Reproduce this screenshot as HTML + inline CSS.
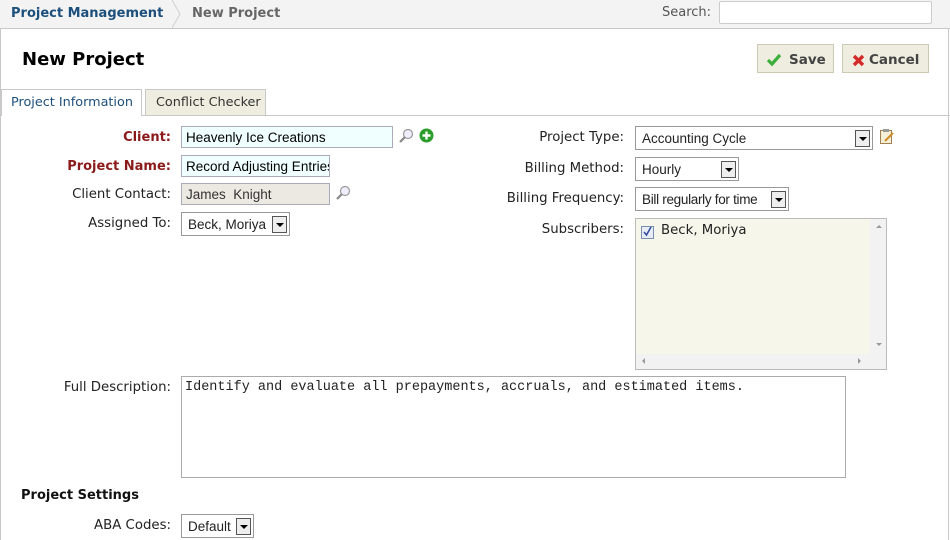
<!DOCTYPE html>
<html><head><style>
body{margin:0;width:950px;height:540px;overflow:hidden;background:#fff;font-family:"DejaVu Sans",Verdana,sans-serif;font-size:12.5px;color:#222;position:relative}
.a{position:absolute}
.top{left:0;top:0;width:950px;height:28px;background:#f3f3f3;border-bottom:1px solid #c8c8c8}
.lbl{position:absolute;text-align:right;font-size:13.3px;color:#222;white-space:nowrap}
.req{color:#8b1a1a;font-weight:bold;font-size:13px}
.inp{position:absolute;border:1px solid #aab;background:#fff;font-family:"Liberation Sans",Arial,sans-serif;font-size:13.5px;color:#000;box-sizing:border-box;padding:2px 4px;white-space:nowrap;overflow:hidden;line-height:17px}
.sel{position:absolute;border:1px solid #999;background:#fff;font-family:"Liberation Sans",Arial,sans-serif;font-size:13.5px;box-sizing:border-box;padding:3px 6px;white-space:nowrap;overflow:hidden;line-height:17px}
.dd{position:absolute;right:2px;top:3px;width:15px;height:17px;background:#eee;border:1px solid #555;box-sizing:border-box}
.dd:after{content:"";position:absolute;left:3px;top:6px;border-left:4px solid transparent;border-right:4px solid transparent;border-top:4px solid #000}
.btn{position:absolute;top:44px;height:29px;background:#efeddf;border:1px solid #ccc9b4;box-sizing:border-box;font-weight:bold;font-size:13.5px;color:#444;line-height:29px}
</style></head><body>
<div class="a top"></div>
<div class="a" style="left:11px;top:6px;font-weight:bold;font-size:13px;color:#1d4f7c">Project Management</div>
<svg class="a" style="left:172px;top:0" width="10" height="28"><path d="M0 0 L8 14 L0 28" fill="none" stroke="#d0d0d0"/></svg>
<div class="a" style="left:192px;top:6px;font-weight:bold;font-size:13px;color:#666">New Project</div>
<div class="a" style="left:662px;top:5px;font-size:13px;color:#555">Search:</div>
<div class="a" style="left:719px;top:1px;width:211px;height:21px;border:1px solid #ccc;background:#fff;border-radius:2px"></div>
<div class="a" style="left:0;top:29px;width:1px;height:511px;background:#c8c8c8"></div>
<div class="a" style="left:948px;top:29px;width:1px;height:511px;background:#c8c8c8"></div>
<div class="a" style="left:22px;top:49px;font-weight:bold;font-size:18px;color:#000">New Project</div>
<div class="btn" style="left:757px;width:77px"><svg class="a" style="left:8px;top:8px" width="16" height="14"><path d="M2 7 L6 11 L14 2" fill="none" stroke="#3cae3c" stroke-width="3.2"/></svg><span style="position:absolute;left:31px;top:1px">Save</span></div>
<div class="btn" style="left:842px;width:87px"><svg class="a" style="left:9px;top:9px" width="13" height="13"><path d="M2 2 L11 11 M11 2 L2 11" stroke="#d42a2a" stroke-width="3.4"/></svg><span style="position:absolute;left:26px;top:1px">Cancel</span></div>
<div class="a" style="left:0;top:115px;width:950px;height:1px;background:#c8c8c8"></div>
<div class="a" style="left:1px;top:89px;width:141px;height:27px;background:#fff;border:1px solid #c8c8c8;border-bottom:none;box-sizing:border-box;color:#1d4f7c;font-size:12.8px;padding:5px 0 0 9px">Project Information</div>
<div class="a" style="left:145px;top:89px;width:121px;height:26px;background:#efeddf;border:1px solid #c8c8c8;border-bottom:none;box-sizing:border-box;color:#333;font-size:12.8px;padding:5px 0 0 10px">Conflict Checker</div>

<div class="lbl req" style="right:779px;top:130px">Client:</div>
<div class="inp" style="left:181px;top:126px;width:212px;height:22px;background:#f0ffff">Heavenly Ice Creations</div>
<svg class="a" style="left:398px;top:128px" width="16" height="16"><circle cx="10" cy="6" r="4.5" fill="#eef" stroke="#999" stroke-width="1.2"/><path d="M7 9 L2 14" stroke="#888" stroke-width="2.2"/></svg>
<svg class="a" style="left:419px;top:128px" width="15" height="15"><circle cx="7.5" cy="7.5" r="7" fill="#2a9d2a"/><path d="M7.5 3.5 V11.5 M3.5 7.5 H11.5" stroke="#fff" stroke-width="2.4"/></svg>
<div class="lbl req" style="right:779px;top:159px">Project Name:</div>
<div class="inp" style="left:181px;top:155px;width:149px;height:22px;background:#f0ffff">Record Adjusting Entries</div>
<div class="lbl" style="right:779px;top:187px">Client Contact:</div>
<div class="inp" style="left:181px;top:183px;width:149px;height:22px;background:#ebe9e2;color:#333">James&nbsp; Knight</div>
<svg class="a" style="left:335px;top:185px" width="16" height="16"><circle cx="10" cy="6" r="4.5" fill="#eef" stroke="#999" stroke-width="1.2"/><path d="M7 9 L2 14" stroke="#888" stroke-width="2.2"/></svg>
<div class="lbl" style="right:779px;top:216px">Assigned To:</div>
<div class="sel" style="left:181px;top:212px;width:109px;height:24px">Beck, Moriya<div class="dd"></div></div>

<div class="lbl" style="right:326px;top:130px">Project Type:</div>
<div class="sel" style="left:635px;top:126px;width:238px;height:24px">Accounting Cycle<div class="dd"></div></div>
<svg class="a" style="left:879px;top:128px" width="16" height="17"><rect x="1.5" y="2.5" width="11" height="13" fill="#f6efd8" stroke="#a08050"/><rect x="4" y="1" width="6" height="3" fill="#999"/><path d="M6 13 L14 5" stroke="#d08a20" stroke-width="2"/></svg>
<div class="lbl" style="right:326px;top:161px">Billing Method:</div>
<div class="sel" style="left:635px;top:157px;width:104px;height:24px">Hourly<div class="dd"></div></div>
<div class="lbl" style="right:326px;top:191px">Billing Frequency:</div>
<div class="sel" style="left:635px;top:187px;width:154px;height:24px;letter-spacing:-0.3px">Bill regularly for time<div class="dd"></div></div>
<div class="lbl" style="right:326px;top:222px">Subscribers:</div>
<div class="a" style="left:635px;top:218px;width:252px;height:152px;border:1px solid #bbb;background:#f6f6ea;box-sizing:border-box">
<div class="a" style="left:5px;top:7px;width:11px;height:11px;border:1px solid #7a8fb0;background:#e8ecf6"></div>
<svg class="a" style="left:6px;top:7px" width="11" height="11"><path d="M2 6 L4.5 9 L9 1" fill="none" stroke="#334a9a" stroke-width="1.5"/></svg>
<div class="a" style="left:25px;top:4px;font-size:13.3px">Beck, Moriya</div>
<div class="a" style="right:0;top:0;width:16px;height:150px;background:#f2f2f2"></div>
<div class="a" style="left:0;bottom:0;width:234px;height:15px;background:#f2f2f2"></div>
<div class="a" style="right:4px;top:6px;border-left:3px solid transparent;border-right:3px solid transparent;border-bottom:3px solid #999"></div>
<div class="a" style="right:4px;top:124px;border-left:3px solid transparent;border-right:3px solid transparent;border-top:3px solid #999"></div>
<div class="a" style="left:6px;bottom:5px;border-top:3px solid transparent;border-bottom:3px solid transparent;border-right:3px solid #999"></div>
<div class="a" style="left:222px;bottom:5px;border-top:3px solid transparent;border-bottom:3px solid transparent;border-left:3px solid #999"></div>
</div>

<div class="lbl" style="right:779px;top:380px">Full Description:</div>
<div class="a" style="left:181px;top:376px;width:665px;height:102px;border:1px solid #aaa;box-sizing:border-box;font-family:'Liberation Mono',monospace;font-size:13.5px;padding:3px 3px;color:#222">Identify and evaluate all prepayments, accruals, and estimated items.</div>
<div class="a" style="left:21px;top:488px;font-weight:bold;font-size:13px;color:#111">Project Settings</div>
<div class="lbl" style="right:779px;top:518px">ABA Codes:</div>
<div class="sel" style="left:181px;top:514px;width:73px;height:24px;padding-left:6px">Default<div class="dd"></div></div>
</body></html>
